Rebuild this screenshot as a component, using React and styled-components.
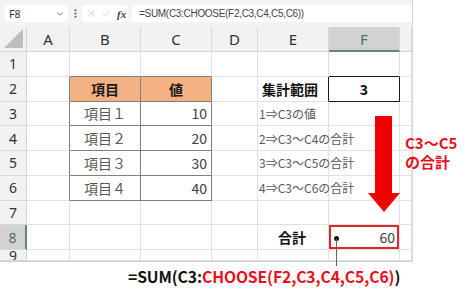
import React from "react";
import styled, { createGlobalStyle } from "styled-components";
import { ChevronDown, EllipsisVertical, X, Check } from "lucide-react";

const GlobalStyle = createGlobalStyle`
  html, body { margin: 0; padding: 0; background: #fff; }
  body { font-family: "Noto Sans CJK JP", "Noto Sans", sans-serif; }
`;

const GRID = "#e1e1e1";
const TABLE_LINE = "#7f7f7f";
const BLACK = "#1a1a1a";
const RED = "#f00000";

const Page = styled.div`
  position: relative;
  width: 474px;
  height: 295px;
  overflow: hidden;
  background: #fff;
`;

const Sheet = styled.div`
  width: 413px;
  border-right: 1px solid #d6d6d6;
  border-bottom: 1px solid #cfcfcf;
  box-sizing: border-box;
`;

// formula bar strip
const Toolbar = styled.div`
  height: 27px;
  background: #f3f3f3;
  display: flex;
  align-items: flex-start;
  padding: 5px 0 0 5px;
  box-sizing: border-box;
`;

const NameBox = styled.div`
  width: 63px;
  height: 17px;
  background: #fff;
  border-radius: 3px;
  display: flex;
  align-items: center;
  justify-content: space-between;
  padding: 0 3px 0 4px;
  box-sizing: border-box;
  font-family: "Noto Sans", sans-serif;
  font-size: 10.5px;
  color: #333;
`;

const Grip = styled.div`
  width: 14px;
  height: 17px;
  display: flex;
  align-items: center;
  justify-content: center;
  color: #555;
`;

const ActionBox = styled.div`
  width: 46px;
  height: 17px;
  background: #fff;
  border-radius: 3px;
  display: flex;
  align-items: center;
  gap: 4px;
  padding-left: 4px;
  box-sizing: border-box;
  color: #c4c4c4;
`;

const Fx = styled.span`
  font-family: "Liberation Serif", serif;
  font-style: italic;
  font-weight: 700;
  font-size: 11px;
  color: #444;
  margin-left: 1px;
`;

const FormulaInput = styled.div`
  flex: 1;
  height: 17px;
  margin-left: 4px;
  background: #fff;
  display: flex;
  align-items: center;
  padding-left: 7px;
  font-family: "Liberation Sans", sans-serif;
  font-size: 10px;
  letter-spacing: -0.3px;
  color: #444;
`;

const Grid = styled.div`
  display: grid;
  grid-template-columns: 27px 43px 71px 71px 46px 71px 71px 12px;
  grid-template-rows: 25px repeat(8, 24.75px) 11px;
  background: #fff;
  overflow: hidden;
`;

const Corner = styled.div`
  background: #f2f2f2;
  border-right: 1px solid #d4d4d4;
  border-bottom: 1px solid #d4d4d4;
  position: relative;
  box-sizing: border-box;
  &::after {
    content: "";
    position: absolute;
    right: 3px;
    bottom: 3px;
    width: 0;
    height: 0;
    border-left: 19px solid transparent;
    border-bottom: 19px solid #bdbdbd;
  }
`;

const ColHead = styled.div`
  box-sizing: border-box;
  background: ${(p) => (p.$active ? "#d2d2d2" : "#f2f2f2")};
  border-right: 1px solid #d9d9d9;
  border-bottom: ${(p) => (p.$active ? "2px solid #5f8a6d" : "1px solid #d4d4d4")};
  display: flex;
  align-items: center;
  justify-content: center;
  font-family: "Noto Sans", sans-serif;
  font-size: 15px;
  color: ${(p) => (p.$active ? "#4f6f5a" : "#333")};
`;

const RowHead = styled.div`
  box-sizing: border-box;
  background: ${(p) => (p.$active ? "#d2d2d2" : "#f2f2f2")};
  border-right: ${(p) => (p.$active ? "2px solid #5f8a6d" : "1px solid #d4d4d4")};
  border-bottom: 1px solid #d9d9d9;
  display: flex;
  align-items: ${(p) => (p.$clip ? "flex-start" : "center")};
  justify-content: center;
  font-family: "Noto Sans", sans-serif;
  font-size: 14px;
  line-height: ${(p) => (p.$clip ? "12px" : "normal")};
  color: ${(p) => (p.$active ? "#4f6f5a" : "#333")};
  overflow: hidden;
`;

const Cell = styled.div`
  box-sizing: border-box;
  position: relative;
  border-right: 1px solid ${(p) => p.$br || GRID};
  border-bottom: 1px solid ${(p) => p.$bb || GRID};
  background: ${(p) => p.$fill || "transparent"};
  box-shadow: ${(p) => (p.$redBox ? `inset 0 0 0 2px #e3262a` : "none")};
  display: flex;
  align-items: center;
  justify-content: ${(p) =>
    p.$align === "right" ? "flex-end" : p.$align === "center" ? "center" : "flex-start"};
  padding: ${(p) => (p.$small ? "0 0 0 1px" : p.$padR ? `0 ${p.$padR}px 0 4px` : "0 4px")};
  font-size: ${(p) => (p.$small ? "12px" : "14px")};
  font-weight: ${(p) => (p.$bold ? 700 : 400)};
  color: ${(p) => p.$color || "#404040"};
  white-space: nowrap;
  z-index: ${(p) => (p.$small ? 1 : 0)};
`;

const Dot = styled.span`
  position: absolute;
  left: 5px;
  top: 11px;
  width: 5px;
  height: 5px;
  border-radius: 50%;
  background: #111;
`;

const Formula = styled.div`
  margin-top: 4px;
  padding-left: 128px;
  font-size: 15.7px;
  font-weight: 700;
  line-height: 22px;
  letter-spacing: -0.1px;
  color: #111;
  white-space: nowrap;
`;

const RedPart = styled.span`
  color: #e8101c;
`;

const ArrowSvg = styled.svg`
  position: absolute;
  left: 366px;
  top: 114px;
`;

const Note = styled.div`
  position: absolute;
  left: 405px;
  top: 133px;
  font-size: 15px;
  font-weight: 700;
  line-height: 19px;
  color: #e8101c;
  white-space: nowrap;
`;

const Leader = styled.div`
  position: absolute;
  left: 336px;
  top: 239px;
  width: 1px;
  height: 27px;
  background: #666;
`;

const COLS = ["A", "B", "C", "D", "E", "F", "G"];
const ORANGE = "#f4b183";

const data = {
  B2: { text: "項目", bold: true, align: "center", fill: ORANGE, color: "#1a1a1a" },
  C2: { text: "値", bold: true, align: "center", fill: ORANGE, color: "#1a1a1a" },
  E2: { text: "集計範囲", bold: true, color: "#111" },
  F2: { text: "3", bold: true, align: "center", color: "#111" },
  B3: { text: "項目１", align: "center", color: "#595959" },
  C3: { text: "10", align: "right" },
  E3: { text: "1⇒C3の値", small: true, color: "#595959" },
  B4: { text: "項目２", align: "center", color: "#595959" },
  C4: { text: "20", align: "right" },
  E4: { text: "2⇒C3〜C4の合計", small: true, color: "#595959" },
  B5: { text: "項目３", align: "center", color: "#595959" },
  C5: { text: "30", align: "right" },
  E5: { text: "3⇒C3〜C5の合計", small: true, color: "#595959" },
  B6: { text: "項目４", align: "center", color: "#595959" },
  C6: { text: "40", align: "right" },
  E6: { text: "4⇒C3〜C6の合計", small: true, color: "#595959" },
  E8: { text: "合計", bold: true, align: "right", color: "#111", padR: 22 },
  F8: { text: "60", align: "right", redBox: true, dot: true, padR: 4 },
};

function edges(col, row) {
  let br;
  let bb;
  const inTable = (col === "B" || col === "C") && row >= 2 && row <= 6;
  if (inTable) {
    br = TABLE_LINE;
    bb = TABLE_LINE;
  }
  if (col === "A" && row >= 2 && row <= 6) br = TABLE_LINE;
  if ((col === "B" || col === "C") && row === 1) bb = TABLE_LINE;
  if (col === "F" && row === 2) {
    br = BLACK;
    bb = BLACK;
  }
  if (col === "E" && row === 2) br = BLACK;
  if (col === "F" && row === 1) bb = BLACK;
  return { br, bb };
}

const rows = [1, 2, 3, 4, 5, 6, 7, 8, 9];

const App = () => {
  return (
    <Page>
      <GlobalStyle />
      <Sheet>
        <Toolbar>
          <NameBox>
            <span>F8</span>
            <ChevronDown size={10} strokeWidth={2} color="#555" />
          </NameBox>
          <Grip>
            <EllipsisVertical size={11} strokeWidth={2.5} />
          </Grip>
          <ActionBox>
            <X size={11} strokeWidth={1.6} />
            <Check size={11} strokeWidth={1.6} />
            <Fx>fx</Fx>
          </ActionBox>
          <FormulaInput>=SUM(C3:CHOOSE(F2,C3,C4,C5,C6))</FormulaInput>
        </Toolbar>
        <Grid>
          <Corner />
          {COLS.map((c) => (
            <ColHead key={c} $active={c === "F"}>
              {c === "G" ? "" : c}
            </ColHead>
          ))}
          {rows.map((r) => (
            <React.Fragment key={r}>
              <RowHead $active={r === 8} $clip={r === 9}>
                {r}
              </RowHead>
              {COLS.map((c) => {
                const cell = data[c + r] || {};
                const { br, bb } = edges(c, r);
                return (
                  <Cell
                    key={c + r}
                    $br={br}
                    $bb={bb}
                    $fill={cell.fill}
                    $align={cell.align}
                    $bold={cell.bold}
                    $small={cell.small}
                    $color={cell.color}
                    $padR={cell.padR}
                    $redBox={cell.redBox}
                  >
                    {cell.dot && <Dot />}
                    {cell.text}
                  </Cell>
                );
              })}
            </React.Fragment>
          ))}
        </Grid>
      </Sheet>
      <Formula>
        =SUM(C3:<RedPart>CHOOSE(F2,C3,C4,C5,C6)</RedPart>)
      </Formula>

      <ArrowSvg width="36" height="100" viewBox="0 0 36 100">
        <rect x="9" y="2" width="17" height="78" fill={RED} />
        <polygon points="2,79 34,79 18,98" fill={RED} />
      </ArrowSvg>
      <Note>
        C3〜C5
        <br />
        の合計
      </Note>
      <Leader />
    </Page>
  );
};

export default App;
